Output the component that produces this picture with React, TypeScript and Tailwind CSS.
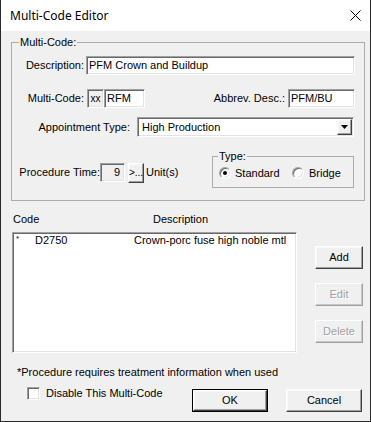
const sunken =
  "border border-t-[#a0a0a0] border-l-[#a0a0a0] border-r-white border-b-white shadow-[inset_1px_1px_0_#696969,inset_-1px_-1px_0_#e3e3e3]";
const raised =
  "border border-t-white border-l-white border-r-[#404040] border-b-[#404040] shadow-[inset_-1px_-1px_0_#a0a0a0,inset_1px_1px_0_#f8f8f8]";
const raisedDisabled =
  "border border-t-white border-l-white border-r-[#a0a0a0] border-b-[#a0a0a0] shadow-[inset_-1px_-1px_0_#c8c8c8]";

const Radio = ({ checked }: { checked?: boolean }) => (
  <div className="w-[12px] h-[12px] rounded-full bg-white border border-t-[#a0a0a0] border-l-[#a0a0a0] border-r-white border-b-white shadow-[inset_1px_1px_0_#696969,inset_-1px_-1px_0_#e3e3e3] flex items-center justify-center shrink-0">
    {checked && <div className="w-[4px] h-[4px] rounded-full bg-black" />}
  </div>
);

const Button = ({ label, disabled, wide }: { label: string; disabled?: boolean; wide?: boolean }) => (
  <div
    className={`${wide ? "w-[76px]" : "w-[48px]"} h-[23px] flex items-center justify-center ${
      disabled ? raisedDisabled + " text-[#a0a0a0] [text-shadow:1px_1px_0_#fff]" : raised
    }`}
  >
    {label}
  </div>
);

export default function App() {
  return (
    <div className="w-[371px] h-[422px] bg-[#f0f0f0] border-x border-b border-[#2b2b2b] flex flex-col font-['Liberation_Sans',Arial,sans-serif] text-[11px] leading-[13px] text-black overflow-hidden">
      {/* title bar */}
      <div className="h-[31px] bg-white flex items-center pl-[9px] pr-[9px] shrink-0">
        <span className="font-['Noto_Sans',sans-serif] text-[12px]">Multi-Code Editor</span>
        <svg className="ml-auto" width="11" height="11" viewBox="0 0 11 11">
          <path d="M0.5 0.5L10.5 10.5M10.5 0.5L0.5 10.5" stroke="#000" strokeWidth="1" fill="none" />
        </svg>
      </div>

      <div className="flex-1 flex flex-col pl-[10px] pr-[5px]">
        {/* Multi-Code group */}
        <fieldset className="mt-[4px] border border-[#acacac]">
          <legend className="ml-[7px] px-[1px] leading-[14px]">Multi-Code:</legend>
          <div className="pt-[7px] pb-[12px]">
            <div className="h-[19px] flex items-center">
              <span className="w-[72px] text-right">Description:</span>
              <div className={`ml-[2px] w-[269px] h-full bg-white flex items-center pl-[2px] ${sunken}`}>
                PFM Crown and Buildup
              </div>
            </div>

            <div className="mt-[14px] h-[19px] flex items-center">
              <span className="w-[72px] text-right">Multi-Code:</span>
              <div className={`ml-[3px] w-[17px] h-full flex items-center justify-center text-[10px] ${sunken}`}>xx</div>
              <div className={`w-[41px] h-full bg-white flex items-center pl-[2px] ${sunken}`}>RFM</div>
              <span className="ml-auto">Abbrev. Desc.:</span>
              <div className={`ml-[3px] mr-[9px] w-[67px] h-full bg-white flex items-center pl-[2px] ${sunken}`}>
                PFM/BU
              </div>
            </div>

            <div className="mt-[9px] h-[20px] flex items-center">
              <span className="w-[118px] text-right">Appointment Type:</span>
              <div className={`ml-[7px] w-[217px] h-full bg-white flex items-center ${sunken}`}>
                <span className="flex-1 pl-[4px]">High Production</span>
                <div className={`w-[15px] h-[16px] mr-[1px] flex items-center justify-center bg-[#f0f0f0] ${raised}`}>
                  <svg width="7" height="4" viewBox="0 0 7 4">
                    <path d="M0 0H7L3.5 4Z" fill="#000" />
                  </svg>
                </div>
              </div>
            </div>

            <div className="mt-[12px] flex items-start">
              <div className="mt-[14px] h-[19px] flex items-center">
                <span className="w-[88px] text-right">Procedure Time:</span>
                <div className={`w-[25px] h-full flex items-center justify-end pr-[4px] ${sunken}`}>9</div>
                <div className={`ml-[3px] w-[16px] h-[20px] flex items-center justify-center text-[10px] ${raised}`}>
                  &gt;...
                </div>
                <span className="ml-[2px]">Unit(s)</span>
              </div>

              <fieldset className="ml-auto mr-[10px] w-[142px] border border-[#acacac]">
                <legend className="ml-[5px] px-[1px] leading-[14px]">Type:</legend>
                <div className="pt-[2px] pb-[6px] pl-[6px] h-[24px] flex items-center">
                  <Radio checked />
                  <span className="ml-[4px] w-[57px]">Standard</span>
                  <Radio />
                  <span className="ml-[5px]">Bridge</span>
                </div>
              </fieldset>
            </div>
          </div>
        </fieldset>

        {/* list header */}
        <div className="mt-[12px] h-[13px] flex pl-[2px]">
          <span className="w-[140px]">Code</span>
          <span>Description</span>
        </div>

        <div className="mt-[6px] flex items-start">
          <div className={`ml-[1px] w-[285px] h-[121px] bg-white ${sunken}`}>
            <div className="mt-[1px] h-[13px] flex pl-[3px]">
              <span className="w-[19px] text-[8px] leading-[10px]">*</span>
              <span className="w-[99px]">D2750</span>
              <span>Crown-porc fuse high noble mtl</span>
            </div>
          </div>
          <div className="ml-[18px] mt-[14px] flex flex-col gap-[14px]">
            <Button label="Add" />
            <Button label="Edit" disabled />
            <Button label="Delete" disabled />
          </div>
        </div>

        <div className="mt-[13px] h-[13px] pl-[6px]">*Procedure requires treatment information when used</div>

        <div className="mt-[8px] flex items-start">
          <div className={`ml-[16px] w-[13px] h-[13px] bg-white ${sunken}`} />
          <span className="ml-[6px] leading-[13px]">Disable This Multi-Code</span>
          <div className="ml-auto mt-[2px] border border-black">
            <div className={`w-[74px] h-[21px] flex items-center justify-center ${raised}`}>OK</div>
          </div>
          <div className="ml-[18px] mr-[3px] mt-[2px]">
            <Button label="Cancel" wide />
          </div>
        </div>
      </div>
    </div>
  );
}
